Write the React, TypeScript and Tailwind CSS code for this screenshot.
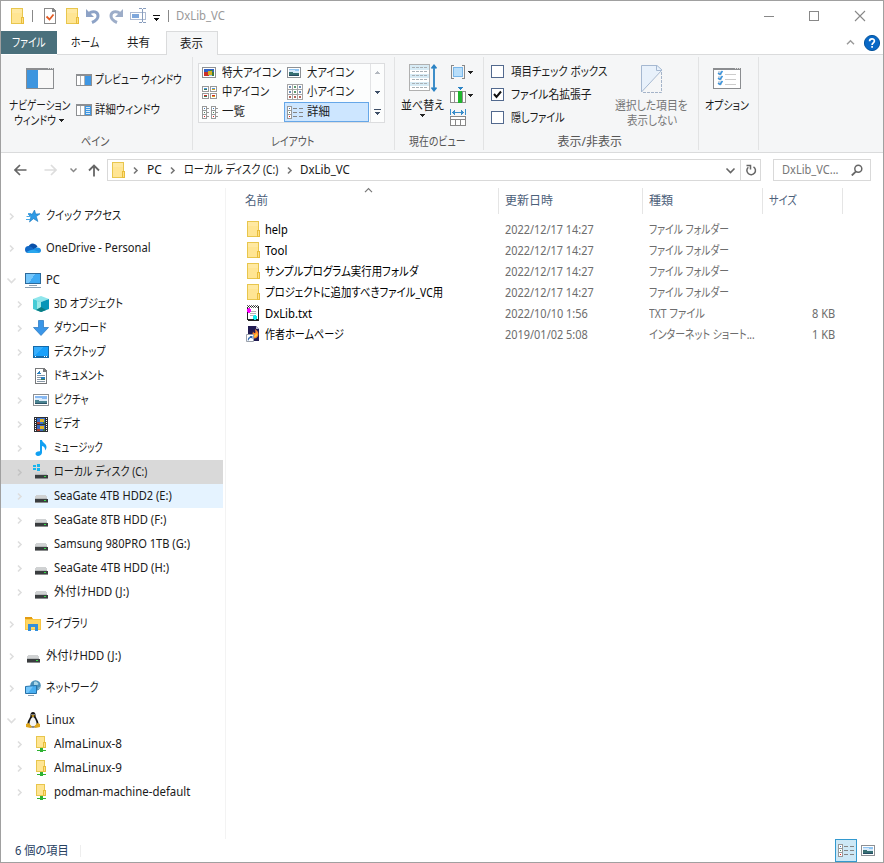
import { useLayoutEffect, useRef, useState } from 'react';
import type { ReactNode } from 'react';

interface TextProps {
  children: string;
  w: number;
  className?: string;
}

// One line of UI text, condensed to the width the narrow UI kana would take
function Text({ children, w, className = '' }: TextProps) {
  const ref = useRef<HTMLSpanElement>(null);
  const [scale, setScale] = useState(1);

  useLayoutEffect(() => {
    if (ref.current) setScale(w / ref.current.offsetWidth);
  }, [w, children]);

  return (
    <span className={`block shrink-0 text-left ${className}`} style={{ width: w }}>
      <span ref={ref} className="inline-block origin-left whitespace-nowrap" style={{ transform: `scaleX(${scale})` }}>
        {children}
      </span>
    </span>
  );
}

interface SvgProps {
  w: number;
  h: number;
  className?: string;
  smooth?: boolean;
  children: ReactNode;
}

function Svg({ w, h, className = '', smooth, children }: SvgProps) {
  return (
    <svg width={w} height={h} viewBox={`0 0 ${w} ${h}`} fill="none"
      shapeRendering={smooth ? 'auto' : 'crispEdges'} className={`block shrink-0 ${className}`}>
      {children}
    </svg>
  );
}

function FolderIcon({ className = '' }: { className?: string }) {
  return (
    <Svg w={16} h={16} className={className}>
      <path d="M1 0h12v16H1z" fill="#e8c64d" />
      <path d="M2 1h10v14H2z" fill="#ffe593" />
      <path d="M2 1h10v4H2z" fill="#ffe9a2" />
      <path d="M11 9h3v7h-3z" fill="#e8bd3b" />
      <path d="M12 10h1v5h-1z" fill="#ffe084" />
    </Svg>
  );
}

function Chevron({ dir, color = '#d5d5d5', thick = 1.6, className = '' }: { dir: 'right' | 'down' | 'up'; color?: string; thick?: number; className?: string }) {
  const d = { right: 'M4 2.5 L7 5.5 L4 8.5', down: 'M1.5 3.5 L5.5 7.5 L9.5 3.5', up: 'M2 7.2 L5.5 3.7 L9 7.2' }[dir];
  return (
    <Svg w={11} h={11} smooth className={className}>
      <path d={d} stroke={color} strokeWidth={thick} />
    </Svg>
  );
}

function Caret({ color = '#222', className = '' }: { color?: string; className?: string }) {
  return (
    <Svg w={5} h={3} className={className}>
      <path d="M0 0h5v1H0zM1 1h3v1H1zM2 2h1v1H2z" fill={color} />
    </Svg>
  );
}

function PictureIcon({ portrait }: { portrait?: boolean }) {
  return (
    <Svg w={15} h={12}>
      <path d="M0 0h14v11H0z" fill="#8d9094" />
      <path d="M1 1h12v9H1z" fill="#fff" />
      <path d="M2 2h10v7H2z" fill="#8fc4f2" />
      {portrait ? (
        <>
          <path d="M2 2h10v3H2z" fill="#2e61c5" />
          <path d="M2 5h5v4H2z" fill="#c93029" />
          <path d="M6 4h4v4H6z" fill="#d5b023" />
          <path d="M8 3h3v1H8zM10 5h2v4h-2z" fill="#417c3b" />
        </>
      ) : (
        <>
          <path d="M2 3h6v1h4v2H2z" fill="#d5e9fa" />
          <path d="M2 5h4v1h6v2H2z" fill="#376f72" />
          <path d="M2 8h10v1H2z" fill="#254b63" />
        </>
      )}
    </Svg>
  );
}

function MediumIcons() {
  return (
    <Svg w={15} h={13}>
      {[0, 8].map(x => [0, 7].map(y => (
        <g key={`${x}-${y}`}>
          <path d={`M${x} ${y}h7v6h-7z`} fill="#999" />
          <path d={`M${x + 1} ${y + 1}h5v4h-5z`} fill="#fff" />
          <path d={`M${x + 2} ${y + 2}h3v1h-3z`} fill={y ? '#d02b23' : '#4f98dc'} />
          <path d={`M${x + 2} ${y + 3}h3v1h-3z`} fill={x ? '#d6a520' : '#3b7a5a'} />
        </g>
      )))}
    </Svg>
  );
}

function SmallIcons() {
  return (
    <Svg w={16} h={16}>
      <path d="M0 0h16v16H0z" fill="#a6a6a6" />
      {[1, 6, 11].map(x => [1, 6, 11].map(y => (
        <g key={`${x}-${y}`}>
          <path d={`M${x} ${y}h4v4h-4z`} fill="#fff" />
          <path d={`M${x + 1} ${y + 1}h2v2h-2z`} fill={y === 11 ? '#b3655c' : x === 6 ? '#5c9a6f' : '#6b8db4'} />
        </g>
      )))}
    </Svg>
  );
}

function ListIcon({ details }: { details?: boolean }) {
  return (
    <Svg w={16} h={13}>
      {(details ? [0] : [0, 9]).map(x => (
        <g key={x}>
          <path d={`M${x} 0h5v13h-5z`} fill="#999" />
          <path d={`M${x + 1} 1h3v3h-3zM${x + 1} 5h3v3h-3zM${x + 1} 9h3v3h-3z`} fill="#fff" />
          <path d={`M${x + 2} 2h1v1h-1z`} fill="#3b78b8" />
          <path d={`M${x + 2} 6h1v1h-1z`} fill="#47845b" />
          <path d={`M${x + 2} 10h1v1h-1z`} fill="#e02020" />
          {!details && <path d={`M${x + 5} 2h2v1h-2zM${x + 5} 6h2v1h-2zM${x + 5} 10h2v1h-2z`} fill="#999" />}
        </g>
      ))}
      {details && <path d="M6 2h4v1H6zM12 2h4v1h-4zM6 6h4v1H6zM12 6h4v1h-4zM6 10h4v1H6zM12 10h4v1h-4z" fill="#858585" />}
    </Svg>
  );
}

function PaneIcon({ lines }: { lines?: boolean }) {
  return (
    <Svg w={16} h={12}>
      <path d="M0 0h16v12H0z" fill="#8d8f92" />
      <path d="M1 2h14v9H1z" fill="#fff" />
      <path d="M4 2h1v9H4zM8 2h1v9H8z" fill="#b1b3b5" />
      <path d="M9 2h6v9H9z" fill="#3f97e3" />
      {lines && <path d="M10 3h4v1h-4zM10 5h4v1h-4zM10 7h4v1h-4zM10 9h4v1h-4z" fill="#d3eafb" />}
    </Svg>
  );
}

function StarIcon() {
  return (
    <Svg w={16} h={16} smooth>
      <path d="M9.5 2l1.200 4 4.300-.2-3.700 2.700 1.600 5-4.400-2.800L4.500 14l1.300-5L3.300 6.200l4-.1z" fill="#2e9ae5" stroke="#1475bd" strokeWidth=".6" />
      <path d="M3 5.500h3M1.500 8.500h4.500M1 11.500h4" stroke="#4aa9e6" />
    </Svg>
  );
}

function CloudIcon() {
  return (
    <Svg w={16} h={16} smooth>
      <path d="M3 9a4 4 0 0 1 1.500-4A5 5 0 0 1 12.500 6.500L9 10z" fill="#0a4fa8" />
      <path d="M3.500 13A3.500 3.500 0 0 1 3.500 6c2.500 0 5 2 8 6z" fill="#1269c7" />
      <path d="M4 13L10 8c3-1.500 6 0 6 2.500 0 1.500-1 2.500-2.500 2.500z" fill="#1b8fe3" />
      <path d="M1.500 12c3-2 6-3.200 9-1.500l4 1.800-1 .7H3.500z" fill="#29a7ee" />
    </Svg>
  );
}

function PcIcon() {
  return (
    <Svg w={16} h={16}>
      <path d="M0 1h16v11H0z" fill="#2c6a9b" />
      <path d="M1 2h14v9H1z" fill="#3eaaf4" />
      <path d="M1 2h9L4 11H1z" fill="#74c6fb" />
      <path d="M4 13h8v1H4zM0 15h16v1H0z" fill="#8ba0b2" />
    </Svg>
  );
}

function CubeIcon() {
  return (
    <Svg w={16} h={16} smooth>
      <path d="M0 3l8-3 8 3-8 3z" fill="#8fe6ec" />
      <path d="M0 3l8 3v10l-8-3z" fill="#45cbd5" />
      <path d="M16 3L8 6v10l8-3z" fill="#0796b8" />
      <path d="M4 5l4 1v6l-4 1z" fill="#9be9e8" />
      <path d="M8 11l5 3-5 2-5-2z" fill="#0b7d83" />
    </Svg>
  );
}

function DownloadIcon() {
  return (
    <Svg w={16} h={16} smooth>
      <path d="M5.500.500h5v7h5L8 15.500.500 7.500h5z" fill="#3a96e8" stroke="#2474bd" strokeWidth=".7" />
    </Svg>
  );
}

function DesktopIcon() {
  return (
    <Svg w={16} h={16}>
      <path d="M0 2h16v12H0z" fill="#1469a8" />
      <path d="M1 3h14v9H1z" fill="#18a0fb" />
      <path d="M1 3h9L2 11H1z" fill="#37aefc" />
      <path d="M2 12h1v1H2zM11 12h1v1h-1zM13 12h1v1h-1z" fill="#fff" />
    </Svg>
  );
}

function DocumentIcon() {
  return (
    <Svg w={16} h={16}>
      <path d="M2 0h9l3 3v13H2z" fill="#77797b" />
      <path d="M3 1h7v3h3v11H3z" fill="#fff" />
      <path d="M4 7h8v1H4zM4 9h8v1H4zM4 11h8v1H4zM4 13h8v1H4z" fill="#8a99a8" />
      <path d="M4 5h1V4h1V3h1v2h1v1H4zM8 9h4v2H8z" fill="#2c7fbe" />
      <path d="M8 11h4v1H8z" fill="#3c7c55" />
    </Svg>
  );
}

function PicturesIcon() {
  return (
    <Svg w={16} h={16}>
      <path d="M0 2h16v12H0z" fill="#8d9094" />
      <path d="M1 3h14v10H1z" fill="#fff" />
      <path d="M2 4h12v8H2z" fill="#88b9f2" />
      <path d="M2 6h7v1h5v2H2z" fill="#dcecfb" />
      <path d="M2 8h4v1h8v3H2z" fill="#4a8391" />
      <path d="M2 11h12v1H2z" fill="#2c5568" />
    </Svg>
  );
}

function VideoIcon() {
  return (
    <Svg w={16} h={16}>
      <path d="M1 1h14v15H1z" fill="#2d2f34" />
      <path d="M4 2h8v6H4z" fill="#3a6ec9" />
      <path d="M4 9h8v6H4z" fill="#3e68bd" />
      <path d="M7 3h4v3H7zM7 10h4v3H7z" fill="#e0b429" />
      <path d="M4 6h3v2H4zM4 13h3v2H4z" fill="#ad3c2e" />
      <path d="M10 6h2v2h-2zM10 13h2v2h-2z" fill="#397648" />
      <path d="M2.500 2v14M13.500 2v14" stroke="#fff" strokeDasharray="1 1" />
    </Svg>
  );
}

function MusicIcon() {
  return (
    <Svg w={16} h={16} smooth>
      <path d="M7 0h2c.3 3 4.500 3.500 4.500 7 0 1.500-.7 2.800-1.500 3.500.3-2.500-.8-4-3-4.500v6.500C9 14.700 7 16 5 16c-1.500 0-2.500-.9-2.500-2.200 0-1.600 1.800-2.800 4.500-2.600z" fill="#11a0f2" />
    </Svg>
  );
}

function DriveIcon({ windows }: { windows?: boolean }) {
  return (
    <Svg w={16} h={16}>
      <path d="M3 7h10v1h1v2H2V8h1z" fill="#d0d2d3" />
      <path d="M2 10h12v1H2z" fill="#b4b7b8" />
      <path d="M2 11h13v3H2z" fill="#3a3d3f" />
      <path d="M2 14h13v1H2z" fill="#8a8c8d" />
      <path d="M11 12h2v1h-2z" fill="#32dd45" />
      {windows && (
        <>
          <path d="M0 0h8v8H0z" fill="#d9d9d9" />
          <path d="M0 1h3v2H0zM4 0h3v3H4zM0 4h3v2H0zM4 4h3v3H4z" fill="#16b5ee" />
        </>
      )}
    </Svg>
  );
}

function LibraryIcon() {
  return (
    <Svg w={16} h={16}>
      <path d="M0 1h7l1 2h8v11H0z" fill="#f9c642" />
      <path d="M0 1h7v2H0z" fill="#e39c13" />
      <path d="M1 4h14v9H1z" fill="#ffd663" />
      <path d="M3 8h10v7h-3v-4H6v4H3z" fill="#338fdc" />
    </Svg>
  );
}

function NetworkIcon() {
  return (
    <Svg w={16} h={16} smooth>
      <circle cx="10.500" cy="5.500" r="5.300" fill="#4c91b9" />
      <path d="M9 2c2-1 3 0 4 1s0 2-1 2-2 1-3 0zM13 8l2-1-1 2z" fill="#aad7e8" />
      <path d="M0.500 6.500l11-1v8l-11 0z" fill="#48aef0" stroke="#2671a7" />
      <path d="M1 7l7-.6L3 13H1z" fill="#74c6fb" />
      <path d="M3 15.500h6" stroke="#8ba0b2" />
    </Svg>
  );
}

function TuxIcon() {
  return (
    <Svg w={16} h={16} smooth>
      <path d="M8 0c1.800 0 2.600 1.500 2.600 3.500 0 2.500 2.900 4.500 2.900 8.500 0 2-2 3.500-5.500 3.500S2.500 14 2.500 12c0-4 2.900-6 2.900-8.500C5.400 1.500 6.200 0 8 0z" fill="#171717" />
      <path d="M8 5c1.500 0 3.600 4.500 3.600 7 0 2-1.800 2.500-3.600 2.500S4.400 14 4.400 12C4.400 9.500 6.500 5 8 5z" fill="#f4f4f4" />
      <path d="M6.200 3.800l1.800-.8 1.800.8L8 5.300zM1 12l2.500-1L7 14.500 5.500 16 1 15zM15 12l-2.500-1L9 14.500l1.500 1.500 4.500-1z" fill="#dea61c" />
      <circle cx="7" cy="2.500" r=".6" fill="#fff" />
      <circle cx="9" cy="2.500" r=".6" fill="#fff" />
    </Svg>
  );
}

function NetFolderIcon() {
  return (
    <Svg w={16} h={16}>
      <path d="M3 0h9v12H3z" fill="#e8c64d" />
      <path d="M4 1h7v10H4z" fill="#ffe593" />
      <path d="M10 6h3v6h-3z" fill="#e8bd3b" />
      <path d="M11 7h1v4h-1z" fill="#ffe084" />
      <path d="M7 12h3v2H7zM4 14h9v1H4zM7 15h3v1H7z" fill="#2eb233" />
    </Svg>
  );
}

function TxtIcon() {
  return (
    <Svg w={16} h={16}>
      <path d="M1 2h12v13H1z" fill="#222" />
      <path d="M2 2h10v12H2z" fill="#fff" />
      <path d="M12 3h1v12h-1zM2 15h11v1H2z" fill="#222" />
      <path d="M2 1.500h11" stroke="#222" strokeDasharray="1 1" />
      <path d="M1 0.500h12M3 2.500h9" stroke="#666" strokeDasharray="1 1" />
      <path d="M4 6h6v1H4zM4 8h6v1H4zM4 10h6v1H4z" fill="#b5b5b5" />
      <path d="M1 4h4v3H1zM2 3h2v5H2z" fill="#f0f" />
      <path d="M7 11h4v3H7zM8 10h2v5H8z" fill="#1ee" />
    </Svg>
  );
}

function UrlIcon() {
  return (
    <Svg w={16} h={16} smooth>
      <path d="M2 0h8l3 3v12H2z" fill="#211b52" />
      <path d="M10 0l3 3h-3z" fill="#b9b9cc" />
      <path d="M7 12c-2-3 0-4 0-7 0 1.500 1 2 2 2 1-1 0-3 0-4 3 2 4 4 3 7-1 2-3 3-5 2z" fill="#ff8a2b" />
      <path d="M8 11c0-2 2-2 2-4 2 2 1 4-2 4z" fill="#ffd23e" />
      <path d="M0.500 8.500h7v7h-7z" fill="#fff" stroke="#9aa1ab" />
      <path d="M1.800 14.500c0-2.500.7-3.500 2.500-3.500L3.500 10H6.500v3l-1-1c-1.500 0-2.500.5-3 2.500z" fill="#2a66b0" />
    </Svg>
  );
}

interface NavRow {
  label: string;
  w: number;
  icon: ReactNode;
  level: 0 | 1;
  open?: boolean;
  state?: 'selected' | 'hover';
}

const drive = (label: string, w: number, state?: NavRow['state']): NavRow => ({ label, w, icon: <DriveIcon />, level: 1, state });

const navGroups: NavRow[][] = [
  [{ label: 'クイック アクセス', w: 75, icon: <StarIcon />, level: 0 }],
  [{ label: 'OneDrive - Personal', w: 105, icon: <CloudIcon />, level: 0 }],
  [
    { label: 'PC', w: 14, icon: <PcIcon />, level: 0, open: true },
    { label: '3D オブジェクト', w: 69, icon: <CubeIcon />, level: 1 },
    { label: 'ダウンロード', w: 52, icon: <DownloadIcon />, level: 1 },
    { label: 'デスクトップ', w: 52, icon: <DesktopIcon />, level: 1 },
    { label: 'ドキュメント', w: 50, icon: <DocumentIcon />, level: 1 },
    { label: 'ピクチャ', w: 35, icon: <PicturesIcon />, level: 1 },
    { label: 'ビデオ', w: 26, icon: <VideoIcon />, level: 1 },
    { label: 'ミュージック', w: 49, icon: <MusicIcon />, level: 1 },
    { label: 'ローカル ディスク (C:)', w: 93, icon: <DriveIcon windows />, level: 1, state: 'selected' },
    drive('SeaGate 4TB HDD2 (E:)', 118, 'hover'),
    drive('SeaGate 8TB HDD (F:)', 112),
    drive('Samsung 980PRO 1TB (G:)', 136),
    drive('SeaGate 4TB HDD (H:)', 115),
    drive('外付けHDD (J:)', 75),
  ],
  [{ label: 'ライブラリ', w: 42, icon: <LibraryIcon />, level: 0 }],
  [{ label: '外付けHDD (J:)', w: 75, icon: <DriveIcon />, level: 0 }],
  [{ label: 'ネットワーク', w: 52, icon: <NetworkIcon />, level: 0 }],
  [
    { label: 'Linux', w: 29, icon: <TuxIcon />, level: 0, open: true },
    { label: 'AlmaLinux-8', w: 68, icon: <NetFolderIcon />, level: 1 },
    { label: 'AlmaLinux-9', w: 68, icon: <NetFolderIcon />, level: 1 },
    { label: 'podman-machine-default', w: 136, icon: <NetFolderIcon />, level: 1 },
  ],
];

const files = [
  { name: 'help', w: 23, icon: <FolderIcon />, date: '2022/12/17 14:27', type: 'ファイル フォルダー', tw: 80 },
  { name: 'Tool', w: 22, icon: <FolderIcon />, date: '2022/12/17 14:27', type: 'ファイル フォルダー', tw: 80 },
  { name: 'サンプルプログラム実行用フォルダ', w: 153, icon: <FolderIcon />, date: '2022/12/17 14:27', type: 'ファイル フォルダー', tw: 80 },
  { name: 'プロジェクトに追加すべきファイル_VC用', w: 178, icon: <FolderIcon />, date: '2022/12/17 14:27', type: 'ファイル フォルダー', tw: 80 },
  { name: 'DxLib.txt', w: 47, icon: <TxtIcon />, date: '2022/10/10 1:56', type: 'TXT ファイル', tw: 56, size: '8 KB' },
  { name: '作者ホームページ', w: 79, icon: <UrlIcon />, date: '2019/01/02 5:08', type: 'インターネット ショート...', tw: 106, size: '1 KB' },
];

const layouts = [
  { label: '特大アイコン', w: 59, icon: <PictureIcon portrait /> },
  { label: '大アイコン', w: 47, icon: <PictureIcon /> },
  { label: '中アイコン', w: 47, icon: <MediumIcons /> },
  { label: '小アイコン', w: 47, icon: <SmallIcons /> },
  { label: '一覧', w: 23, icon: <ListIcon /> },
  { label: '詳細', w: 23, icon: <ListIcon details />, active: true },
];

function TitleBar() {
  return (
    <div className="flex h-[30px] shrink-0 items-center justify-between">
      <div className="flex items-center">
        <FolderIcon className="-mt-px ml-[9px]" />
        <div className="ml-[6px] h-3 w-px bg-[#888]" />
        <Svg w={12} h={16} className="ml-[11px]">
          <path d="M0 0h9l3 3v13H0z" fill="#8a8a8a" />
          <path d="M1 1h7v3h3v11H1z" fill="#fff" />
          <path d="M2.500 8.500l3 3 4-5" stroke="#e35a22" strokeWidth="1.800" shapeRendering="auto" />
        </Svg>
        <FolderIcon className="ml-[9px]" />
        <Svg w={14} h={16} smooth className="ml-[5px]">
          <path d="M3 5.500C7 2 12 4 12 8c0 3-2.500 5-6 6.500" stroke="#8da2c6" strokeWidth="3" />
          <path d="M0 1v8h8z" fill="#8da2c6" />
        </Svg>
        <Svg w={14} h={16} smooth className="ml-[9px]">
          <path d="M11 5.500C7 2 2 4 2 8c0 3 2.500 5 6 6.500" stroke="#9dadc8" strokeWidth="3" />
          <path d="M14 1v8H6z" fill="#9dadc8" />
        </Svg>
        <Svg w={16} h={16} className="ml-[7px]">
          <path d="M0 4h16v8H0z" fill="#aebbd2" />
          <path d="M1 5h14v6H1z" fill="#fff" />
          <path d="M2 6h7v4H2z" fill="#7fa7db" />
          <path d="M9 0h3v1H9zM13 0h3v1h-3zM12 1h1v13h-1zM9 14h3v1H9zM13 14h3v1h-3z" fill="#889dbd" />
        </Svg>
        <Svg w={7} h={6} className="mt-[3px] ml-[7px]">
          <path d="M0 0h7v1H0zM1 3h5v1H1zM2 4h3v1H2zM3 5h1v1H3z" fill="#111" />
        </Svg>
        <div className="ml-[8px] h-3 w-px bg-[#888]" />
        <Text w={49} className="ml-[7px] text-[#999]">DxLib_VC</Text>
      </div>
      <div className="flex items-center">
        <Svg w={10} h={10}><path d="M0 5h10v1H0z" fill="#888" /></Svg>
        <Svg w={10} h={10} className="ml-[35px]"><path d="M.5.5h9v9h-9z" stroke="#888" /></Svg>
        <Svg w={12} h={12} smooth className="mr-[17px] ml-[35px]"><path d="M1 1l10 10M11 1L1 11" stroke="#888" strokeWidth="1.100" /></Svg>
      </div>
    </div>
  );
}

function Tabs() {
  return (
    <div className="flex h-6 shrink-0">
      <div className="flex h-[23px] w-14 items-center bg-[#4a707c] pl-[11px]">
        <Text w={34} className="text-white">ファイル</Text>
      </div>
      <div className="flex w-[109px] items-center border-b border-[#dadbdc]">
        <Text w={28} className="ml-[14px]">ホーム</Text>
        <Text w={23} className="ml-[28px]">共有</Text>
      </div>
      <div className="flex w-[52px] items-center border border-b-0 border-[#dadbdc] bg-[#f5f6f7] pl-[13px]">
        <Text w={23}>表示</Text>
      </div>
      <div className="flex flex-1 items-center justify-end border-b border-[#dadbdc] pr-[3px]">
        <Chevron dir="up" color="#999" thick={1.4} />
        <Svg w={16} h={16} smooth className="ml-[8px]">
          <circle cx="8" cy="8" r="7.600" fill="#0868c6" stroke="#07559d" />
          <path d="M5.600 6.200C5.600 3 10.400 3.100 10.400 6c0 1.900-2.300 1.900-2.300 4M8.100 11v1.700" stroke="#fff" strokeWidth="1.700" />
        </Svg>
      </div>
    </div>
  );
}

function Group({ title, tw, className, children }: { title: string; tw: number; className: string; children: ReactNode }) {
  return (
    <div className={`my-[2px] flex flex-col items-center border-r border-[#e2e3e4] ${className}`}>
      <div className="flex h-[78px] w-full items-start">{children}</div>
      {title && <Text w={tw} className="mr-[3px] leading-[14px] text-[#555]">{title}</Text>}
    </div>
  );
}

function Ribbon() {
  return (
    <div className="flex h-[98px] shrink-0 border-b border-[#dadbdc] bg-[#f5f6f7]">
      <Group title="ペイン" tw={28} className="w-[192px]">
        <div className="mt-[11px] ml-[7px] flex w-[62px] flex-col items-center">
          <Svg w={28} h={21} className="ml-px">
            <path d="M0 0h28v21H0z" fill="#8b8d90" />
            <path d="M1 2h26v18H1z" fill="#f8f8f8" />
            <path d="M1 2h11v18H1z" fill="#3d95df" />
            <path d="M22 .5h5" stroke="#ddd" strokeDasharray="1 1" />
          </Svg>
          <Text w={61} className="mt-[9px] leading-[15px]">ナビゲーション</Text>
          <div className="flex items-center">
            <Text w={42} className="leading-[15px]">ウィンドウ</Text>
            <Caret className="ml-[3px]" />
          </div>
        </div>
        <div className="mt-[14px] ml-[6px]">
          <div className="flex h-[18px] items-center"><PaneIcon /><Text w={87} className="ml-[3px]">プレビュー ウィンドウ</Text></div>
          <div className="mt-[12px] flex h-[18px] items-center"><PaneIcon lines /><Text w={65} className="ml-[3px]">詳細ウィンドウ</Text></div>
        </div>
      </Group>

      <Group title="レイアウト" tw={43} className="w-[202px]">
        <div className="mt-[6px] ml-[5px] flex h-[60px] w-[187px] border border-[#dcdddf] bg-[#fcfdfd]">
          <div className="grid w-[171px] grid-cols-[85px_85px] grid-rows-[18px_20px_20px]">
            {layouts.map(item => (
              <div key={item.label}
                className={`flex items-center ${item.active ? 'border border-[#66a7e8] bg-[#cde6ff] pl-[2px]' : 'pl-[3px]'}`}>
                <div className="w-[20px]">{item.icon}</div>
                <Text w={item.w} className="leading-[18px]">{item.label}</Text>
              </div>
            ))}
          </div>
          <div className="flex flex-1 flex-col items-center justify-around border-l border-[#e2e3e5]">
            <Svg w={5} h={3}><path d="M2 0h1v1H2zM1 1h3v1H1zM0 2h5v1H0z" fill="#b4b9c0" /></Svg>
            <Caret color="#3f5068" className="mt-[2px]" />
            <Svg w={7} h={6}><path d="M0 0h7v1H0zM1 3h5v1H1zM2 4h3v1H2zM3 5h1v1H3z" fill="#3f5068" /></Svg>
          </div>
        </div>
      </Group>

      <Group title="現在のビュー" tw={57} className="w-[89px]">
        <div className="mt-[7px] ml-[5px] flex w-[44px] flex-col items-center">
          <Svg w={28} h={28} className="ml-[1px]">
            <path d="M0 0h21v27H0z" fill="#b0b0b0" />
            <path d="M1 1h19v25H1z" fill="#fff" />
            <path d="M1 1h19v5H1zM1 10h19v4H1zM1 18h19v4H1z" fill="#d7ebf5" />
            <path d="M3 3.500h15M3 7.500h15M3 11.500h15M3 15.500h15M3 19.500h15M3 23.500h15" stroke="#a9b0b5" strokeDasharray="3 1" />
            <path d="M25 2v24M22.500 4.500L25 1.500l2.500 3M22.500 23.500l2.500 3 2.500-3" stroke="#2b83c4" strokeWidth="1.800" shapeRendering="auto" />
          </Svg>
          <Text w={43} className="mt-[6px] leading-[15px]">並べ替え</Text>
          <Caret className="mt-px" />
        </div>
        <div className="mt-[7px] ml-[6px] flex flex-col">
          <div className="flex h-[16px] items-center">
            <Svg w={16} h={14}>
              <path d="M1 0h3v1H2v12h2v1H1zM12 0h3v14h-3v-1h2V1h-2z" fill="#888" />
              <path d="M3 2h10v10H3z" fill="#79b6e8" />
              <path d="M4 3h8v8H4z" fill="#b8defa" />
            </Svg>
            <Caret className="ml-[2px]" />
          </div>
          <div className="mt-[7px] flex h-[16px] items-center">
            <Svg w={16} h={16}>
              <path d="M0 4h16v12H0z" fill="#8e8e8e" />
              <path d="M1 5h3v10H1zM5 5h3v10H5zM13 5h2v10h-2z" fill="#fff" />
              <path d="M8 4h4v12H8z" fill="#20b52e" />
              <path d="M8 0h5v1H8zM9 1h3v1H9zM10 2h1v1h-1z" fill="#2b83c4" />
            </Svg>
            <Caret className="ml-[2px]" />
          </div>
          <Svg w={16} h={17} className="mt-[6px]">
            <path d="M0 0h1v6H0zM15 0h1v6h-1zM2 3h12v1H2zM3 2h1v3H3zM4 1h1v5H4zM12 2h1v3h-1zM11 1h1v5h-1z" fill="#3a8ecb" />
            <path d="M0 7h16v10H0z" fill="#888" />
            <path d="M1 8h14v2H1zM1 11h4v5H1zM6 11h4v5H6zM11 11h4v5h-4z" fill="#fff" />
          </Svg>
        </div>
      </Group>

      <Group title="表示/非表示" tw={64} className="w-[215px]">
        <div className="mt-[3px] ml-[7px] flex w-[117px] flex-col">
          {[
            { label: '項目チェック ボックス', w: 96, on: false },
            { label: 'ファイル名拡張子', w: 81, on: true },
            { label: '隠しファイル', w: 54, on: false },
          ].map(item => (
            <div key={item.label} className="flex h-[23px] items-center">
              <div className="size-[13px] border border-[#52698e] bg-white">
                {item.on && <Svg w={11} h={11} smooth><path d="M2 5l2.500 3L9 2.500" stroke="#111" strokeWidth="2" /></Svg>}
              </div>
              <Text w={item.w} className="ml-[7px]">{item.label}</Text>
            </div>
          ))}
        </div>
        <div className="mt-[8px] ml-[7px] flex w-[73px] flex-col items-center text-[#777]">
          <Svg w={22} h={28} smooth>
            <path d="M.5.5h16l4 4L.5 27z" fill="#e8f1fb" />
            <path d="M.5 27V.5h15.500l5 4.500L.5 27M15.500 1v4.500H21" stroke="#a5b8d1" />
            <path d="M20.500 7v20.500H1" stroke="#a5b4c9" strokeDasharray="3 1" />
          </Svg>
          <Text w={73} className="mt-[5px] leading-[15px]">選択した項目を</Text>
          <Text w={50} className="leading-[15px]">表示しない</Text>
        </div>
      </Group>

      <Group title="" tw={0} className="w-[60px]">
        <div className="mt-[11px] ml-[6px] flex w-[44px] flex-col items-center">
          <Svg w={28} h={21}>
            <path d="M0 0h28v21H0z" fill="#8b8d90" />
            <path d="M1 2h26v18H1z" fill="#fff" />
            <path d="M22 .5h5" stroke="#ddd" strokeDasharray="1 1" />
            <path d="M5 3h4v4H5zM5 8h4v4H5zM5 13h4v4H5z" fill="#d1d8df" />
            <path d="M12 6h11v1H12zM12 11h11v1H12zM12 16h11v1H12z" fill="#ccc" />
            <path d="M5 5l2 1.500L9.500 3M5 10l2 1.500L9.500 8M5 15l2 1.500 2.500-3.500" stroke="#3993dc" strokeWidth="1.500" shapeRendering="auto" />
          </Svg>
          <Text w={44} className="mt-[9px] leading-[15px]">オプション</Text>
        </div>
      </Group>
    </div>
  );
}

function AddressBar() {
  return (
    <div className="mb-px flex h-[34px] shrink-0 items-center">
      <Svg w={13} h={12} smooth className="ml-[13px]"><path d="M12.500 6H1M6 1L1 6l5 5" stroke="#666" strokeWidth="1.700" /></Svg>
      <Svg w={13} h={12} smooth className="ml-[17px]"><path d="M.5 6H12M7 1l5 5-5 5" stroke="#ddd" strokeWidth="1.700" /></Svg>
      <Svg w={7} h={5} smooth className="ml-[13px]"><path d="M.5.5l3 3 3-3" stroke="#888" strokeWidth="1.500" /></Svg>
      <Svg w={12} h={13} smooth className="ml-[11px]"><path d="M6 12.500V1.500M1 6.500l5-5 5 5" stroke="#666" strokeWidth="1.800" /></Svg>
      <div className="ml-[7px] flex h-[22px] w-[654px] items-center border border-[#d9d9d9] pl-[3px]">
        <FolderIcon className="-mt-px" />
        <Chevron dir="right" color="#777" className="ml-[3px]" />
        <Text w={15} className="ml-[6px]">PC</Text>
        <Chevron dir="right" color="#777" className="ml-[5px]" />
        <Text w={94} className="ml-[6px]">ローカル ディスク (C:)</Text>
        <Chevron dir="right" color="#777" className="ml-[6px]" />
        <Text w={50} className="ml-[5px]">DxLib_VC</Text>
        <Chevron dir="down" color="#666" className="mr-[4px] ml-auto" />
        <div className="flex h-full w-5 items-center justify-center border-l border-[#d9d9d9]">
          <Svg w={12} h={12} smooth>
            <path d="M8.500 2.800A4.300 4.300 0 1 1 3.300 3.200M1.500 1.500h4v4" stroke="#666" strokeWidth="1.500" />
          </Svg>
        </div>
      </div>
      <div className="ml-[12px] flex h-[22px] w-[98px] items-center border border-[#d9d9d9] pl-[8px]">
        <Text w={57} className="text-[#777]">DxLib_VC...</Text>
        <Svg w={12} h={12} smooth className="ml-[12px]">
          <circle cx="7.300" cy="4.700" r="3.500" stroke="#666" strokeWidth="1.500" />
          <path d="M5 7.300L.8 11.500" stroke="#666" strokeWidth="1.800" />
        </Svg>
      </div>
    </div>
  );
}

function NavPane() {
  return (
    <div className="flex w-[225px] shrink-0 flex-col gap-2 border-r border-[#f3f3f3] pt-4">
      {navGroups.map((rows, i) => (
        <div key={i}>
          {rows.map(row => (
            <div key={row.label}
              className={`flex h-6 w-[222px] items-center ${row.level ? 'pl-[13px]' : 'pl-[5px]'} ${row.state === 'selected' ? 'bg-[#d9d9d9]' : ''} ${row.state === 'hover' ? 'bg-[#e5f3ff]' : ''}`}>
              <Chevron dir={row.open ? 'down' : 'right'} color={row.state === 'selected' ? '#c4c4c4' : '#dedede'} />
              <div className="ml-[8px]">{row.icon}</div>
              <Text w={row.w} className="ml-[5px]">{row.label}</Text>
            </div>
          ))}
        </div>
      ))}
    </div>
  );
}

function FileList() {
  return (
    <div className="flex flex-1 flex-col">
      <div className="relative flex h-[26px] items-center text-[#4c607a]">
        <Chevron dir="up" color="#777" thick={1.200} className="absolute -top-[3px] left-[137px]" />
        <div className="flex h-full w-[273px] items-center border-r border-[#e5e5e5] pl-[19px]"><Text w={23}>名前</Text></div>
        <div className="flex h-full w-[144px] items-center border-r border-[#e5e5e5] pl-[6px]"><Text w={48}>更新日時</Text></div>
        <div className="flex h-full w-[120px] items-center border-r border-[#e5e5e5] pl-[6px]"><Text w={24}>種類</Text></div>
        <div className="flex h-full w-[80px] items-center border-r border-[#e5e5e5] pl-[6px]"><Text w={28}>サイズ</Text></div>
      </div>
      <div className="mt-[5px]">
        {files.map(file => (
          <div key={file.name} className="flex h-[21px] items-center pl-[20px] text-[#6d6d6d]">
            <div className="-mt-px">{file.icon}</div>
            <div className="w-[243px] pl-[3px] text-black"><Text w={file.w}>{file.name}</Text></div>
            <div className="w-[144px]"><Text w={file.date.length === 16 ? 89 : 83}>{file.date}</Text></div>
            <div className="w-[163px]"><Text w={file.tw}>{file.type}</Text></div>
            {file.size && <Text w={23}>{file.size}</Text>}
          </div>
        ))}
      </div>
    </div>
  );
}

function StatusBar() {
  return (
    <div className="flex h-[23px] shrink-0 items-center pl-[14px] text-[#26405f]">
      <Text w={54}>6 個の項目</Text>
      <div className="ml-[11px] h-3 w-px bg-[#eee]" />
      <div className="ml-auto flex h-[23px] w-[22px] items-center justify-center border border-[#3399cf] bg-[#cde8f6]">
        <ListIcon details />
      </div>
      <div className="mr-[7px] ml-[4px]"><PictureIcon /></div>
    </div>
  );
}

export default function App() {
  return (
    <div lang="ja"
      className="flex h-[863px] w-[884px] flex-col overflow-hidden border border-[#a0a0a0] bg-white font-['Noto_Sans','Noto_Sans_CJK_JP',sans-serif] text-[12px] leading-[18px] text-[#1a1a1a] [font-feature-settings:'palt']">
      <TitleBar />
      <Tabs />
      <Ribbon />
      <AddressBar />
      <div className="flex flex-1">
        <NavPane />
        <FileList />
      </div>
      <StatusBar />
    </div>
  );
}
